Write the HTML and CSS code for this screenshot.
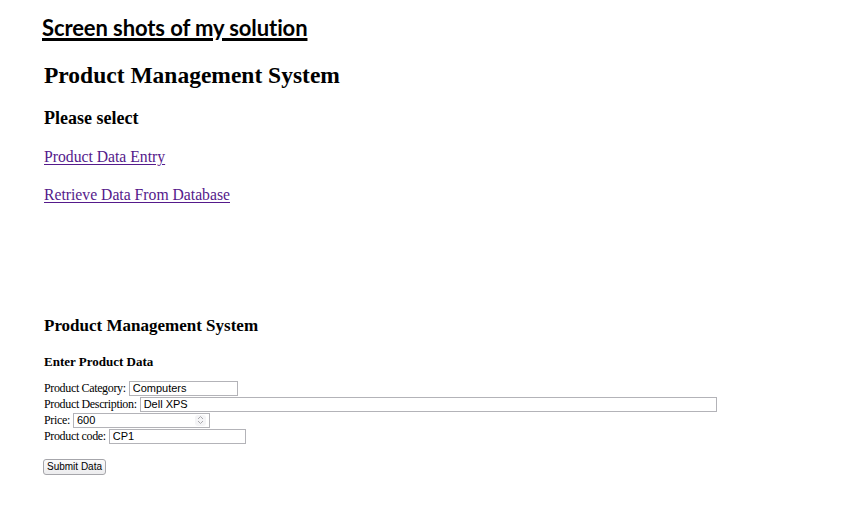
FILE: index.html
```html
<!DOCTYPE html>
<html>
<head>
<meta charset="utf-8">
<link rel="stylesheet" href="styles.css">
</head>
<body>
<div class="page">
  <div class="caption">Screen shots of my solution</div>

  <section class="shot shot-menu">
    <h1 class="menu-title">Product Management System</h1>
    <h3 class="menu-sub">Please select</h3>
    <p class="menu-link"><a href="#">Product Data Entry</a></p>
    <p class="menu-link"><a href="#">Retrieve Data From Database</a></p>
  </section>

  <section class="shot shot-form">
    <h2 class="form-title">Product Management System</h2>
    <h4 class="form-sub">Enter Product Data</h4>
    <form class="form">
      <div class="row">
        <label>Product Category:</label>
        <span class="field w-cat"><input type="text" value="Computers"></span>
      </div>
      <div class="row">
        <label>Product Description:</label>
        <span class="field w-desc"><input type="text" value="Dell XPS"></span>
      </div>
      <div class="row">
        <label>Price:</label>
        <span class="field w-price"><input type="text" value="600"><span class="stepper"><svg width="7" height="10" viewBox="0 0 7 10"><path d="M1 4 L3.5 1.5 L6 4 M1 6 L3.5 8.5 L6 6" fill="none" stroke="#a9a9ad" stroke-width="1"/></svg></span></span>
      </div>
      <div class="row">
        <label>Product code:</label>
        <span class="field w-code"><input type="text" value="CP1"></span>
      </div>
      <div class="submit-row">
        <button type="button" class="btn">Submit Data</button>
      </div>
    </form>
  </section>
</div>
</body>
</html>
```

FILE: styles.css
```css
html, body {
  margin: 0;
  padding: 0;
  background: #ffffff;
}

.page {
  padding: 14px 0 0 42px;
  font-family: "Liberation Serif", "Times New Roman", serif;
  color: #000;
}

.caption {
  font-family: Lato, "Open Sans", sans-serif;
  font-weight: 700;
  font-size: 22px;
  line-height: 28px;
  text-decoration: underline;
  text-decoration-thickness: 2.5px;
  text-underline-offset: 2px;
  letter-spacing: -0.1px;
}

.shot {
  padding-left: 2px;
}

.menu-title {
  font-size: 23.5px;
  font-weight: 700;
  line-height: 28px;
  margin: 19px 0 0;
}

.menu-sub {
  font-size: 18px;
  font-weight: 700;
  line-height: 22px;
  margin: 18px 0 0;
}

.menu-link {
  font-size: 15.7px;
  line-height: 18px;
  margin: 19px 0 0;
}

.menu-link + .menu-link {
  margin-top: 20px;
}

.menu-link a {
  color: #551a8b;
  text-decoration: underline;
  text-underline-offset: 2px;
}

.shot-form {
  margin-top: 111px;
}

.form-title {
  font-size: 17px;
  font-weight: 700;
  line-height: 22px;
  margin: 0;
}

.form-sub {
  font-size: 13px;
  font-weight: 700;
  line-height: 16px;
  margin: 17px 0 0;
}

.form {
  margin-top: 10px;
}

.row {
  display: flex;
  align-items: center;
  height: 16px;
  font-size: 12px;
  letter-spacing: -0.35px;
}

.row label {
  margin-right: 3px;
  white-space: nowrap;
}

.field {
  display: flex;
  align-items: center;
  height: 13px;
  border: 1px solid #b3b3b8;
  background: #fff;
  box-sizing: content-box;
  letter-spacing: 0;
}

.field input {
  border: 0;
  outline: 0;
  padding: 0 0 0 3px;
  margin: 0;
  height: 13px;
  flex: 1;
  min-width: 0;
  font-family: "Liberation Sans", Arial, sans-serif;
  font-size: 11px;
  color: #000;
  background: transparent;
}

.w-cat { width: 107px; }
.w-desc { width: 575px; }
.w-price { width: 135px; }
.w-code { width: 135px; }

.stepper {
  display: flex;
  align-items: center;
  justify-content: center;
  width: 11px;
  height: 11px;
  margin-right: 3px;
  border-radius: 3px;
  background: #f4f4f6;
}

.submit-row {
  margin-top: 12px;
}

.btn {
  font-family: "Liberation Sans", Arial, sans-serif;
  font-size: 10px;
  height: 16px;
  padding: 0 3px;
  margin-left: -1px;
  border: 1px solid #a6a6ab;
  border-radius: 3px;
  background: linear-gradient(#fbfbfb, #ececee);
  color: #000;
  line-height: 14px;
}
```
